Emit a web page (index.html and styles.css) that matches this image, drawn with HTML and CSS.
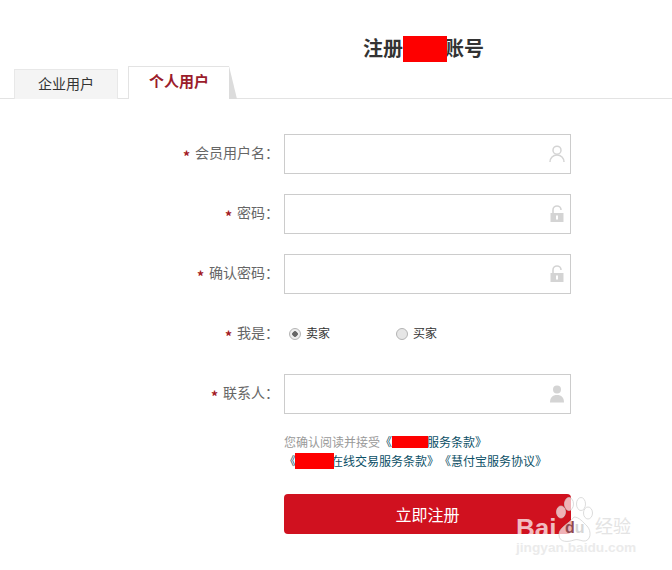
FILE: index.html
```html
<!DOCTYPE html>
<html lang="zh-CN">
<head>
<meta charset="utf-8">
<title>注册账号</title>
<link rel="stylesheet" href="styles.css">
</head>
<body>
<div class="page">
  <header class="head">
    <h1 class="title">注册<span class="redact redact-title"></span>账号</h1>
    <nav class="tabs">
      <a class="tab">企业用户</a>
      <a class="tab active">个人用户</a>
    </nav>
  </header>
  <form class="form">
    <div class="row">
      <label class="label"><i class="star">*</i>会员用户名：</label>
      <div class="field">
        <svg class="icon" viewBox="0 0 16 18"><circle cx="8" cy="5.2" r="4" fill="none" stroke="#d4d4d4" stroke-width="1.5"/><path d="M1 17c0-4 3-7 7-7s7 3 7 7" fill="none" stroke="#d4d4d4" stroke-width="1.5"/></svg>
      </div>
    </div>
    <div class="row">
      <label class="label"><i class="star">*</i>密码：</label>
      <div class="field">
        <svg class="icon" viewBox="0 0 16 18"><path d="M4 8V5a4 4 0 0 1 8 0" fill="none" stroke="#d4d4d4" stroke-width="1.6"/><path d="M1.500 8h13v9h-13z" fill="#d4d4d4"/><rect x="7" y="10.500" width="2" height="4" fill="#fff"/></svg>
      </div>
    </div>
    <div class="row">
      <label class="label"><i class="star">*</i>确认密码：</label>
      <div class="field">
        <svg class="icon" viewBox="0 0 16 18"><path d="M4 8V5a4 4 0 0 1 8 0" fill="none" stroke="#d4d4d4" stroke-width="1.6"/><path d="M1.500 8h13v9h-13z" fill="#d4d4d4"/><rect x="7" y="10.500" width="2" height="4" fill="#fff"/></svg>
      </div>
    </div>
    <div class="row">
      <label class="label"><i class="star">*</i>我是：</label>
      <div class="radios">
        <span class="radio-item"><i class="radio checked"></i>卖家</span>
        <span class="radio-item"><i class="radio"></i>买家</span>
      </div>
    </div>
    <div class="row">
      <label class="label"><i class="star">*</i>联系人：</label>
      <div class="field">
        <svg class="icon" viewBox="0 0 16 18"><circle cx="8" cy="4.500" r="4" fill="#d4d4d4"/><path d="M1 17.500c0-5 2.500-7.500 7-7.500s7 2.500 7 7.500z" fill="#d4d4d4"/></svg>
      </div>
    </div>
    <div class="terms">
      <p class="terms-line"><span class="muted">您确认阅读并接受</span>《<span class="redact redact-a"></span>服务条款》</p>
      <p class="terms-line">《<span class="redact redact-b"></span>在线交易服务条款》《慧付宝服务协议》</p>
    </div>
    <button class="submit" type="button">立即注册</button>
  </form>
  <div class="mark">
    <span class="mark-bai">Bai</span>
    <svg class="mark-paw" viewBox="0 0 40 48">
      <ellipse cx="5" cy="16" rx="4.500" ry="6"/>
      <ellipse cx="13" cy="8" rx="4.500" ry="6.500"/>
      <ellipse cx="25" cy="8" rx="4.500" ry="6.500"/>
      <ellipse cx="32" cy="17" rx="4.500" ry="6"/>
      <path d="M18 21c5 0 9 5 13 9 5 5 4 16-4 15-4-1-6-2-9-1-5 2-15 3-15-5 0-8 9-10 15-18z"/>
    </svg>
    <span class="mark-du"><b class="mark-d">d</b>u</span>
    <span class="mark-jy">经验</span>
    <span class="mark-url">jingyan.baidu.com</span>
  </div>
</div>
</body>
</html>
```
FILE: styles.css
```css
* { box-sizing: border-box; }
html, body { margin: 0; padding: 0; background: #fff; }
body { font-family: "Noto Sans CJK SC", "Liberation Sans", sans-serif; text-spacing-trim: space-all; }
.page { position: relative; width: 672px; height: 570px; overflow: hidden; }

.head { height: 99px; border-bottom: 1px solid #e3e3e3; position: relative; }
.title { margin: 0; padding: 34px 0 0 363px; font-size: 20px; line-height: 28px; height: 66px; font-weight: 700; color: #333; display: flex; align-items: flex-start; }
.redact { display: inline-block; background: #fe0000; position: relative; }
.redact-title { width: 44px; height: 26px; margin: 2px -3px 0 0; }
.tabs { display: flex; align-items: flex-end; padding-left: 14px; gap: 10px; height: 33px; margin-bottom: -1px; position: relative; }
.tab { display: block; text-align: center; font-size: 14px; color: #333; }
.tabs .tab:first-child { width: 104px; height: 30px; line-height: 27px; background: #f4f4f4; border: 1px solid #e8e8e8; border-bottom: 0; }
.tab.active { width: 101px; height: 33px; line-height: 28px; font-size: 15px; background: #fff; border: 1px solid #e3e3e3; border-bottom: 0; border-right: 0; color: #9b1c2b; font-weight: 700; position: relative; }
.tab.active::after { content: ""; position: absolute; left: 100px; top: -1px; border-left: 8px solid #dcdcdc; border-bottom: 33px solid transparent; transform: scaleY(-1); }

.form { padding-top: 35px; display: flex; flex-direction: column; }
.row { display: flex; align-items: center; height: 40px; margin-bottom: 20px; }
.label { width: 279px; margin-right: 5px; padding-bottom: 4px; text-align: right; font-size: 14px; color: #666; line-height: 20px; }
.star { font-style: normal; font-weight: 700; color: #a31a25; margin-right: 5px; font-size: 14px; line-height: 0; vertical-align: -4px; }
.field { width: 287px; height: 40px; border: 1px solid #ccc; display: flex; align-items: center; justify-content: flex-end; padding-right: 5px; }
.icon { width: 16px; height: 18px; display: block; }
.radios { display: flex; padding-left: 5px; }
.radio-item { display: flex; align-items: center; width: 107px; padding-bottom: 3px; font-size: 12px; color: #333; }
.radio { width: 12px; height: 12px; margin: 3px 5px 0 0; border-radius: 50%; border: 1px solid #b4b4b4; background: #e6e6e6; }
.radio.checked { background: radial-gradient(circle, #666 0 2.5px, #eee 3px); }

.terms { padding-left: 284px; margin-top: -2px; font-size: 12px; color: #0b4f66; }
.terms-line { margin: 0; height: 19px; line-height: 19px; display: flex; align-items: center; white-space: nowrap; }
.muted { color: #999; }
.redact-a { width: 36px; height: 12px; margin-right: -1px; }
.redact-b { width: 39px; height: 16px; margin: 0 -3px 0 -1px; }
.submit { margin: 24px 0 0 284px; width: 287px; height: 40px; border: 0; border-radius: 4px; background: #d0111f; color: #fff; font: 16px/40px "Noto Sans CJK SC", sans-serif; padding: 0; }

.mark { position: absolute; left: 516px; top: 496px; width: 124px; height: 60px; }
.mark-bai { position: absolute; left: 0; top: 22px; font: 700 26px/20px "Liberation Sans", sans-serif; color: rgba(255,255,255,.72); }
.mark-paw { position: absolute; left: 40px; top: 0; width: 40px; height: 48px; fill: rgba(255,255,255,.68); stroke: rgba(205,205,205,.7); stroke-width: 1; }
.mark-du { position: absolute; left: 49px; top: 24px; font: 700 16px/16px "Liberation Sans", sans-serif; color: #d6d6d6; }
.mark-d { font-weight: 700; color: #8f4a52; }
.mark-jy { position: absolute; left: 79px; top: 17px; font-size: 18px; line-height: 24px; color: #e4e4e4; }
.mark-url { position: absolute; top: 44px; left: 0; font: 700 13.7px/16px "Liberation Sans", sans-serif; color: #ebebeb; white-space: nowrap; }
```
